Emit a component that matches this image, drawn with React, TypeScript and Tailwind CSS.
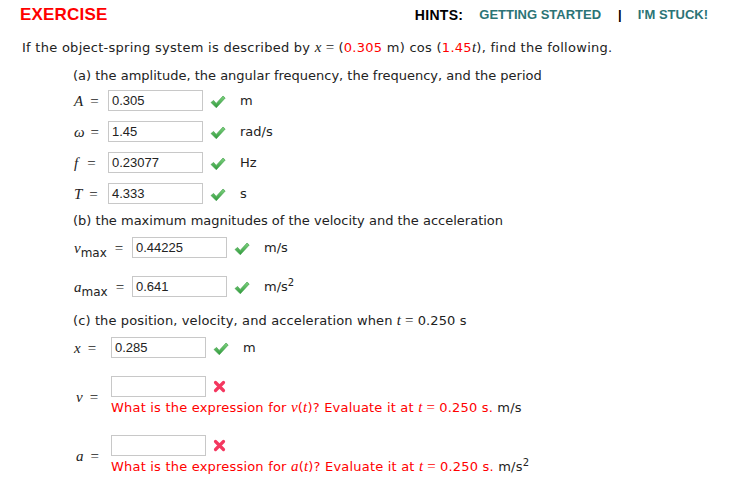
import React from 'react';

const body = { fontFamily: '"DejaVu Sans", Verdana, sans-serif' };
const serif = { fontFamily: '"Liberation Serif", "Times New Roman", serif' };

function Check() {
  return (
    <svg width="16" height="14" viewBox="0 0 16 14" className="shrink-0">
      <defs>
        <linearGradient id="ck" x1="0" y1="0" x2="0" y2="1">
          <stop offset="0" stopColor="#7fd37f" />
          <stop offset="1" stopColor="#2f9a3c" />
        </linearGradient>
      </defs>
      <path d="M1 7.5 L3.6 5.4 L6.2 8.4 L13 1 L15.2 3 L6.3 12.8 Z" fill="url(#ck)" stroke="#3a9a44" strokeWidth="0.6" strokeLinejoin="round" />
    </svg>
  );
}

function Cross() {
  return (
    <svg width="13" height="13" viewBox="0 0 13 13" className="shrink-0">
      <path d="M2.5 2.5 L10.5 10.5 M10.5 2.5 L2.5 10.5" stroke="#f4375f" strokeWidth="3.2" strokeLinecap="round" />
    </svg>
  );
}

function Box({ value }: { value?: string }) {
  return (
    <div className="w-[95px] h-[21px] border border-[#c8c8c8] bg-white px-[3px] text-[13px] leading-[19px] text-[#222]" style={{ fontFamily: '"Liberation Sans", Arial, sans-serif' }}>
      {value}
    </div>
  );
}

function V({ children }: { children: React.ReactNode }) {
  return <i style={serif} className="text-[15px] leading-none">{children}</i>;
}

function Eq() {
  return <span style={serif} className="text-[15px] leading-none mx-[4px]">=</span>;
}

function Row({ label, labelW, value, unit, className = '' }: { label: React.ReactNode; labelW: string; value: string; unit: React.ReactNode; className?: string }) {
  return (
    <div className={`flex items-center h-[21px] ${className}`}>
      <div className={`${labelW} pl-[1px] text-[15px] leading-[18px] text-[#222] whitespace-nowrap`} style={serif}>{label}</div>
      <Box value={value} />
      <div className="ml-[7px] w-[30px] flex items-center pt-[2px]"><Check /></div>
      <div className="text-[13px] leading-[16px] text-[#222]" style={body}>{unit}</div>
    </div>
  );
}

const Lab = ({ v, gap = 'ml-[7px]' }: { v: string; gap?: string }) => (
  <>
    <V>{v}</V>
    <span className={gap}>=</span>
  </>
);

const Sub = ({ v, s }: { v: string; s: string }) => (
  <span>
    <V>{v}</V>
    <span className="text-[12px] leading-none relative top-[4px]" style={body}>{s}</span>
    <span className="ml-[8px]">=</span>
  </span>
);

function Hint({ v, unit }: { v: string; unit: React.ReactNode }) {
  return (
    <div className="mt-[3px] text-[13px] leading-[16px] text-[#ff0000] whitespace-nowrap tracking-[0.2px]">
      What is the expression for <V>{v}</V>(<V>t</V>)? Evaluate it at <V>t</V><Eq />0.250 s. <span className="text-[#222]">{unit}</span>
    </div>
  );
}

export default function App() {
  return (
    <div className="w-[729px] h-[484px] bg-white overflow-hidden text-[#222]" style={body}>
      <div className="flex items-center h-[20px] mt-[5px] pl-[20px]" style={{ fontFamily: '"Liberation Sans", Arial, sans-serif' }}>
        <div className="text-[17px] font-bold text-[#ff0000] tracking-[0.2px]">EXERCISE</div>
        <div className="ml-auto flex items-center text-[13px] font-bold">
          <span className="text-[14px] text-black tracking-[0.3px]">HINTS:</span>
          <span className="ml-[16px] text-[#2b7476]">GETTING STARTED</span>
          <span className="ml-[17px] text-black">|</span>
          <span className="ml-[16px] mr-[21px] text-[#2b7476]">I'M STUCK!</span>
        </div>
      </div>

      <p className="mt-[15px] ml-[22px] text-[13px] leading-[16px] tracking-[0.27px] whitespace-nowrap">
        If the object-spring system is described by <V>x</V><Eq />(<span className="text-[#ff0000]">0.305</span> m) cos (<span className="text-[#ff0000]">1.45</span><V>t</V>), find the following.
      </p>

      <div className="ml-[73px]">
        <p className="mt-[12px] text-[13px] leading-[16px]">(a) the amplitude, the angular frequency, the frequency, and the period</p>
        <Row className="mt-[6px]" labelW="w-[35px]" label={<Lab v="A" />} value="0.305" unit="m" />
        <Row className="mt-[10px]" labelW="w-[35px]" label={<Lab v="ω" gap="ml-[6px]" />} value="1.45" unit="rad/s" />
        <Row className="mt-[10px]" labelW="w-[35px]" label={<Lab v="f" gap="ml-[9px]" />} value="0.23077" unit="Hz" />
        <Row className="mt-[10px]" labelW="w-[35px]" label={<Lab v="T" />} value="4.333" unit="s" />

        <p className="mt-[9px] text-[13px] leading-[16px]">(b) the maximum magnitudes of the velocity and the acceleration</p>
        <Row className="mt-[8px]" labelW="w-[59px]" label={<Sub v="v" s="max" />} value="0.44225" unit="m/s" />
        <Row className="mt-[18px]" labelW="w-[59px]" label={<Sub v="a" s="max" />} value="0.641" unit={<>m/s<sup className="text-[10px]">2</sup></>} />

        <p className="mt-[16px] text-[13px] leading-[16px] tracking-[0.12px] whitespace-nowrap">(c) the position, velocity, and acceleration when <V>t</V><Eq />0.250 s</p>
        <Row className="mt-[8px]" labelW="w-[38px]" label={<Lab v="x" />} value="0.285" unit="m" />

        <div className="flex items-center mt-[18px]">
          <div className="w-[38px] pl-[3px] text-[15px] leading-[18px] pt-[2px]" style={serif}><Lab v="v" /></div>
          <div>
            <div className="flex items-center">
              <Box />
              <div className="ml-[7px]"><Cross /></div>
            </div>
            <Hint v="v" unit="m/s" />
          </div>
        </div>

        <div className="flex items-center mt-[19px]">
          <div className="w-[38px] pl-[3px] text-[15px] leading-[18px] pt-[2px]" style={serif}><Lab v="a" /></div>
          <div>
            <div className="flex items-center">
              <Box />
              <div className="ml-[7px]"><Cross /></div>
            </div>
            <Hint v="a" unit={<>m/s<sup className="text-[10px]">2</sup></>} />
          </div>
        </div>
      </div>
    </div>
  );
}
